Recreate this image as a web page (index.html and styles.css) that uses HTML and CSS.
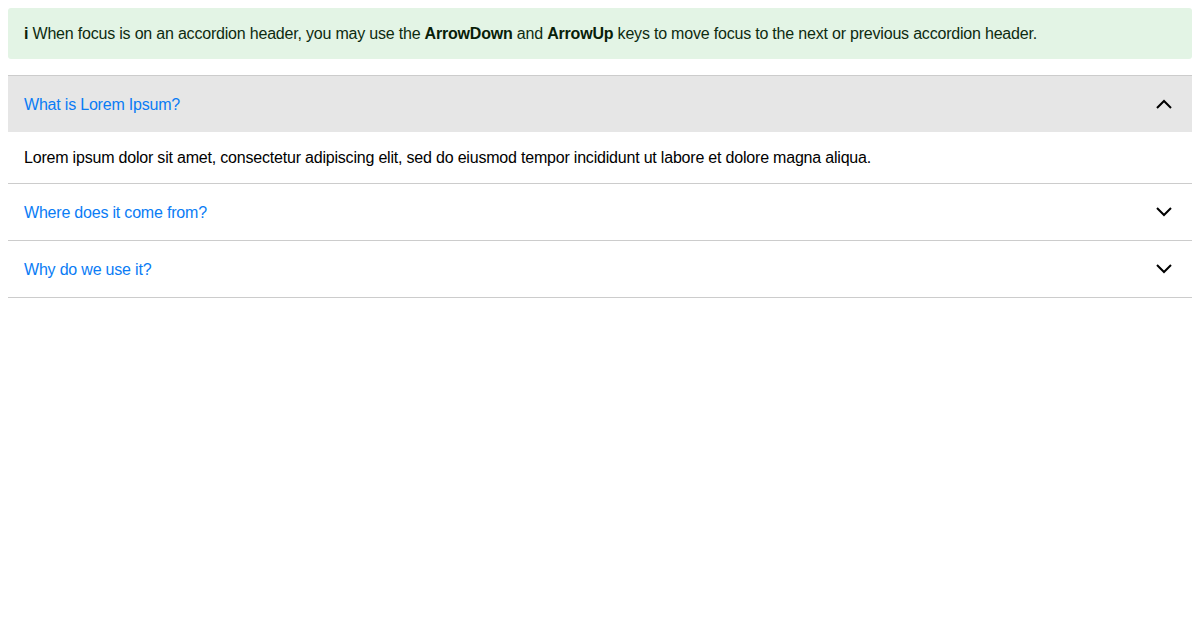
FILE: index.html
```html
<!DOCTYPE html>
<html lang="en">
<head>
<meta charset="utf-8">
<title>Accordion</title>
<link rel="stylesheet" href="styles.css">
</head>
<body>
<div class="note"><b>i</b> When focus is on an accordion header, you may use the <b>ArrowDown</b> and <b>ArrowUp</b> keys to move focus to the next or previous accordion header.</div>
<div class="accordion">
  <div class="item open">
    <button class="header"><span class="title">What is Lorem Ipsum?</span>
      <svg class="chev" width="24" height="24" viewBox="0 0 24 24"><path d="M5 16l7-7 7 7" fill="none" stroke="#000" stroke-width="2"/></svg>
    </button>
    <div class="panel">Lorem ipsum dolor sit amet, consectetur adipiscing elit, sed do eiusmod tempor incididunt ut labore et dolore magna aliqua.</div>
  </div>
  <div class="item">
    <button class="header"><span class="title">Where does it come from?</span>
      <svg class="chev" width="24" height="24" viewBox="0 0 24 24"><path d="M5 8l7 7 7-7" fill="none" stroke="#000" stroke-width="2"/></svg>
    </button>
  </div>
  <div class="item">
    <button class="header"><span class="title">Why do we use it?</span>
      <svg class="chev" width="24" height="24" viewBox="0 0 24 24"><path d="M5 8l7 7 7-7" fill="none" stroke="#000" stroke-width="2"/></svg>
    </button>
  </div>
</div>
</body>
</html>
```
FILE: styles.css
```css
body {
  margin: 8px;
  font-family: "Liberation Sans", Arial, sans-serif;
  font-size: 16px;
  line-height: 18px;
  letter-spacing: -0.2px;
  color: #000;
  background: #fff;
}
.note {
  background: #e3f4e5;
  color: #0d2b10;
  border-radius: 3px;
  padding: 17px 16px 16px;
  margin-bottom: 16px;
}
.note b { color: #082008; }
.accordion {
  border-top: 1px solid #cccccc;
}
.item {
  border-bottom: 1px solid #cccccc;
}
.header {
  display: flex;
  align-items: center;
  justify-content: space-between;
  width: 100%;
  height: 56px;
  padding: 0 16px;
  border: 0;
  background: transparent;
  font: inherit;
  letter-spacing: inherit;
  color: #0a7cf5;
  text-align: left;
  cursor: pointer;
}
.title { padding-top: 2px; }
.item.open .header {
  background: #e6e6e6;
}
.chev { display: block; }
.panel {
  padding: 17px 16px 16px;
}
```
